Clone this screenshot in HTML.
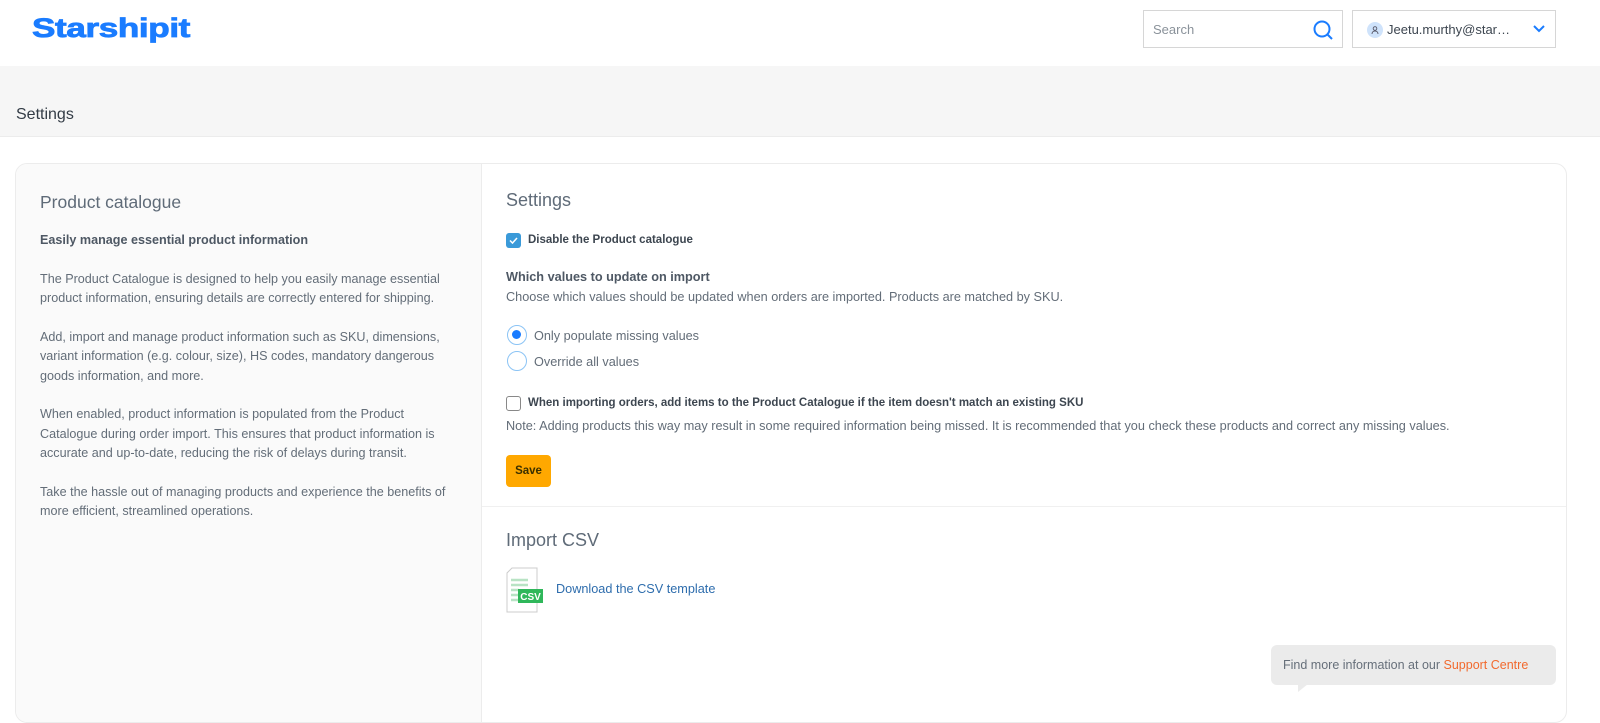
<!DOCTYPE html>
<html><head><style>
*{box-sizing:border-box;margin:0;padding:0}
body{width:1600px;height:706px;overflow:hidden;background:#fff;font-family:"Liberation Sans",sans-serif;color:#5f6b78;position:relative}
.hdr{height:66px;background:#fff;position:relative}
.logo{position:absolute;left:32px;top:13px;font-size:27px;font-weight:bold;color:#1a7cff;letter-spacing:-0.3px;transform:scaleX(1.3);transform-origin:left top;-webkit-text-stroke:0.8px #1a7cff}
.search{position:absolute;left:1143px;top:10px;width:200px;height:38px;border:1px solid #d6d6d6;font-size:13px;color:#8a929a;padding:11px 9px}
.user{position:absolute;left:1352px;top:10px;width:204px;height:38px;border:1px solid #d6d6d6;font-size:13px;color:#3d4650;padding:11px 0 0 34px}
.band{position:absolute;top:66px;left:0;width:1600px;height:71px;background:#f6f6f6;border-bottom:1px solid #ececec}
.band span{position:absolute;left:16px;top:40px;font-size:16px;color:#333c46}
.card{position:absolute;left:15px;top:163px;width:1552px;height:560px;border:1px solid #ececec;border-radius:12px;overflow:hidden}
.left{position:absolute;left:0;top:0;width:466px;height:100%;background:#fafafa;border-right:1px solid #ececec;padding:28px 24px}
.left h2{font-size:17.5px;font-weight:400;color:#5f6b78;margin-bottom:18px}
.left p{font-size:12.6px;line-height:19.5px;margin-bottom:19px;color:#636d78}
.left b{color:#4e5864}
.r{position:absolute;left:490px;font-size:12.7px}
h3.r{font-size:18px;font-weight:400;color:#5f6b78}
.cb{position:absolute;width:15px;height:15px;border-radius:3px}
.rad{position:absolute;width:20px;height:20px;border-radius:50%;border:1.5px solid #8cc4f5;background:#fff}
.save{position:absolute;left:490px;top:291px;width:45px;height:32px;background:#ffa800;border-radius:4px;font-size:11.5px;font-weight:bold;color:#3a3000;text-align:center;line-height:32px}
.tip{position:absolute;left:1271px;top:645px;width:285px;height:40px;background:#ebebeb;border-radius:6px;font-size:12.5px;color:#666f7a;padding:13px 0 0 12px}
</style></head><body>
<div class="hdr">
<div class="logo">Starshipit</div>
<div class="search">Search
<svg style="position:absolute;right:8px;top:8px" width="22" height="22" viewBox="0 0 22 22"><circle cx="10" cy="10" r="7.5" fill="none" stroke="#1a7cff" stroke-width="2"/><line x1="15.5" y1="15.5" x2="20" y2="20" stroke="#1a7cff" stroke-width="2"/></svg></div>
<div class="user"><span style="position:absolute;left:14px;top:11px;width:16px;height:16px;border-radius:50%;background:#cfe3fb"></span><svg style="position:absolute;left:17px;top:14px" width="10" height="10" viewBox="0 0 10 10"><circle cx="5" cy="3.5" r="1.8" fill="none" stroke="#556" stroke-width="0.9"/><path d="M2 9c0-2 1.5-3 3-3s3 1 3 3" fill="none" stroke="#556" stroke-width="0.9"/></svg>Jeetu.murthy@star…
<svg style="position:absolute;right:10px;top:14px" width="12" height="8" viewBox="0 0 12 8"><path d="M1 1l5 5 5-5" fill="none" stroke="#1a7cff" stroke-width="2"/></svg></div>
</div>
<div class="band"><span>Settings</span></div>
<div class="card">
<div class="left">
<h2>Product catalogue</h2>
<p><b>Easily manage essential product information</b></p>
<p>The Product Catalogue is designed to help you easily manage essential product information, ensuring details are correctly entered for shipping.</p>
<p>Add, import and manage product information such as SKU, dimensions, variant information (e.g. colour, size), HS codes, mandatory dangerous goods information, and more.</p>
<p>When enabled, product information is populated from the Product Catalogue during order import. This ensures that product information is accurate and up-to-date, reducing the risk of delays during transit.</p>
<p>Take the hassle out of managing products and experience the benefits of more efficient, streamlined operations.</p>
</div>
<h3 class="r" style="top:26px">Settings</h3>
<div class="cb" style="left:490px;top:69px;background:#3a9ad9"><svg width="15" height="15" viewBox="0 0 15 15"><path d="M4 7.5l2.5 2.5 4.5-5" fill="none" stroke="#fff" stroke-width="1.5"/></svg></div>
<div class="r" style="left:512px;top:70px;font-size:11.5px;font-weight:bold;color:#3d4650">Disable the Product catalogue</div>
<div class="r" style="top:106px;font-weight:bold;color:#4e5864">Which values to update on import</div>
<div class="r" style="top:126px;color:#636d78">Choose which values should be updated when orders are imported. Products are matched by SKU.</div>
<div class="rad" style="left:491px;top:161px"><span style="position:absolute;left:4px;top:4px;width:9px;height:9px;border-radius:50%;background:#1a7cff"></span></div>
<div class="r" style="left:518px;top:165px;color:#636d78">Only populate missing values</div>
<div class="rad" style="left:491px;top:187px"></div>
<div class="r" style="left:518px;top:191px;color:#636d78">Override all values</div>
<div class="cb" style="left:490px;top:232px;border:1px solid #888;background:#fff"></div>
<div class="r" style="left:512px;top:233px;font-size:11.5px;font-weight:bold;color:#3d4650">When importing orders, add items to the Product Catalogue if the item doesn't match an existing SKU</div>
<div class="r" style="top:255px;color:#636d78">Note: Adding products this way may result in some required information being missed. It is recommended that you check these products and correct any missing values.</div>
<div class="save">Save</div>
<div style="position:absolute;left:466px;top:342px;width:1100px;height:1px;background:#f0f0f0"></div>
<h3 class="r" style="top:366px">Import CSV</h3>
<svg style="position:absolute;left:490px;top:403px" width="40" height="46" viewBox="0 0 40 46"><path d="M1 6L6 1H31V45H1Z" fill="#fff" stroke="#ccc"/><path d="M5 13h17M5 18h17M5 23h8M5 28h8M5 33h8" stroke="#b8e3c4" stroke-width="2.5"/><rect x="12" y="22" width="25" height="14" fill="#2fb75a"/><text x="24.5" y="33" font-size="10" font-weight="bold" fill="#fff" text-anchor="middle" font-family="Liberation Sans">CSV</text></svg>
<div class="r" style="left:540px;top:418px;color:#2e6dad">Download the CSV template</div>
</div>
<div class="tip">Find more information at our <span style="color:#f26a2e">Support Centre</span></div>
<div style="position:absolute;left:1298px;top:684px;border-right:10px solid transparent;border-top:8px solid #ebebeb;width:0;height:0"></div>
</body></html>
